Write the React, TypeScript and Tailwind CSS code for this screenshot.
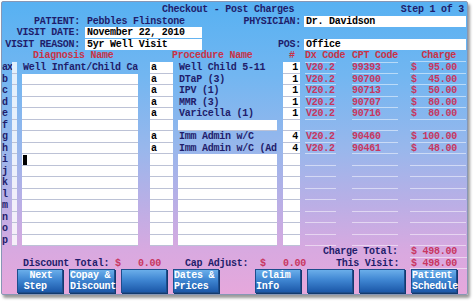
import React from "react";

type Row = {
  l: string;
  dx: string;
  m: string;
  proc: string;
  n: string;
  code: string;
  cpt: string;
  chg: string;
};

const rows: Row[] = [
  { l: "ax", dx: "Well Infant/Child Ca", m: "a", proc: "Well Child 5-11", n: "1", code: "V20.2", cpt: "99393", chg: "$  95.00" },
  { l: "b", dx: "", m: "a", proc: "DTaP (3)", n: "1", code: "V20.2", cpt: "90700", chg: "$  45.00" },
  { l: "c", dx: "", m: "a", proc: "IPV (1)", n: "1", code: "V20.2", cpt: "90713", chg: "$  50.00" },
  { l: "d", dx: "", m: "a", proc: "MMR (3)", n: "1", code: "V20.2", cpt: "90707", chg: "$  80.00" },
  { l: "e", dx: "", m: "a", proc: "Varicella (1)", n: "1", code: "V20.2", cpt: "90716", chg: "$  80.00" },
  { l: "f", dx: "", m: "", proc: "", n: "", code: "", cpt: "", chg: "" },
  { l: "g", dx: "", m: "a", proc: "Imm Admin w/C", n: "4", code: "V20.2", cpt: "90460", chg: "$ 100.00" },
  { l: "h", dx: "", m: "a", proc: "Imm Admin w/C (Ad", n: "4", code: "V20.2", cpt: "90461", chg: "$  48.00" },
  ..."ijklmnop".split("").map((l) => ({ l, dx: "", m: "", proc: "", n: "", code: "", cpt: "", chg: "" })),
];

function Button({ label }: { label: string }) {
  return (
    <div className="w-[46px] h-[24px] border border-[#1d4d8c] bg-[linear-gradient(180deg,#6aaeea_0%,#3f86d2_45%,#1c58a8_100%)] shadow-[1px_1px_0_#123a6e] text-white whitespace-pre leading-[10.5px] pt-[1px] overflow-visible">
      {label}
    </div>
  );
}

export default function App() {
  return (
    <div className="w-[474px] h-[301px] bg-white pt-[1px] pl-[1px] font-['Liberation_Mono','Courier_New',monospace] text-[10px] font-bold tracking-[-0.25px] leading-[11px] text-[#1f1d6b]">
      <div className="w-[467px] h-[294px] border border-[#8797b5] rounded-[2px] shadow-[2px_3px_3px_rgba(0,0,0,0.4)] bg-[linear-gradient(180deg,#57b1f2_0%,#72b6f1_25%,#98b7ec_50%,#b8afe6_68%,#d8a9e0_85%,#e6a8dc_100%)] flex flex-col">
        {/* title */}
        <div className="flex h-[12px] mt-[2px] leading-[12px]">
          <span className="pl-[160px]">Checkout - Post Charges</span>
          <span className="ml-auto pr-[3px]">Step 1 of 3</span>
        </div>

        {/* patient info */}
        <div className="flex h-[11px]">
          <span className="w-[78px] text-right">PATIENT:</span>
          <span className="ml-[5px] w-[117px] pl-[2px]">Pebbles Flinstone</span>
          <span className="w-[99px] text-right">PHYSICIAN:</span>
          <span className="ml-[3px] w-[162px] pl-[2px] bg-white text-black">Dr. Davidson</span>
        </div>
        <div className="flex h-[11px]">
          <span className="w-[78px] text-right">VISIT DATE:</span>
          <span className="ml-[5px] w-[117px] pl-[2px] bg-white text-black">November 22, 2010</span>
        </div>
        <div className="flex h-[11px] mt-[1px]">
          <span className="w-[78px] text-right">VISIT REASON:</span>
          <span className="ml-[5px] w-[117px] pl-[2px] bg-white text-black">5yr Well Visit</span>
          <span className="w-[99px] text-right">POS:</span>
          <span className="ml-[3px] w-[162px] pl-[2px] bg-white text-black">Office</span>
        </div>

        {/* column headers */}
        <div className="flex h-[12px] leading-[12px] text-[#c93246] whitespace-pre">
          <span className="w-[31px]" />
          <span className="w-[139px]">Diagnosis Name</span>
          <span className="w-[117px]">Procedure Name</span>
          <span className="w-[16px]">#</span>
          <span className="w-[47px]">
            <span className="block w-[31px] border-b border-white/50">Dx Code</span>
          </span>
          <span className="w-[58px]">
            <span className="block w-[46px] border-b border-white/50">CPT Code</span>
          </span>
          <span className="w-[56px] border-b border-white/50 text-right pr-[10px]">Charge</span>
        </div>

        {/* line items */}
        <div className="flex flex-col">
          {rows.map((r, i) => (
            <div key={r.l} className="flex h-[11.5px] leading-[11px] whitespace-pre">
              <span className="w-[10px] tracking-[-1px]">{r.l}</span>
              <span className="w-[5px] bg-white/80 border-b border-[#bcc2d6]" />
              <span className="w-[5px]" />
              <span
                className={
                  "w-[116px] pl-[1px] overflow-hidden " +
                  (r.dx ? "" : "bg-white border-b border-[#bcc2d6]")
                }
              >
                {i === 8 ? <span className="inline-block w-[4px] h-[10px] mt-[1px] bg-black" /> : r.dx}
              </span>
              <span className="w-[12px]" />
              <span className="w-[23px] pl-[1px] bg-white border-b border-[#bcc2d6] text-black">{r.m}</span>
              <span className="w-[5px]" />
              <span
                className={
                  "w-[99px] pl-[1px] overflow-hidden " +
                  (r.proc ? "" : "bg-white border-b border-[#bcc2d6]")
                }
              >
                {r.proc}
              </span>
              <span className="w-[6px]" />
              <span className="w-[17px] pr-[2px] text-right bg-white border-b border-[#bcc2d6] text-black">{r.n}</span>
              <span className="w-[5px]" />
              <span className="w-[31px] pl-[1px] border-b border-white/50 text-[#c83660]">{r.code}</span>
              <span className="w-[16px]" />
              <span className="w-[46px] border-b border-white/50 text-[#c83660]">{r.cpt}</span>
              <span className="w-[12px]" />
              <span className="w-[56px] pl-[1px] border-b border-white/50 text-[#c83660]">{r.chg}</span>
            </div>
          ))}
        </div>

        {/* totals */}
        <div className="flex h-[12px] leading-[12px] whitespace-pre">
          <span className="w-[321px]" />
          <span className="w-[87px]">Charge Total:</span>
          <span className="w-[57px] pl-[1px] border-b border-white/50 text-[#c83660]">$ 498.00</span>
        </div>
        <div className="flex h-[11px] whitespace-pre">
          <span className="w-[21px]" />
          <span className="w-[92px]">Discount Total:</span>
          <span className="w-[70px] text-[#c83660]">$   0.00</span>
          <span className="w-[75px]">Cap Adjust:</span>
          <span className="w-[76px] text-[#c83660]">$   0.00</span>
          <span className="w-[74px]">This Visit:</span>
          <span className="w-[57px] pl-[1px] border-b border-white/50 text-[#c83660]">$ 498.00</span>
        </div>

        {/* function keys */}
        <div className="flex h-[24px]">
          <div className="flex gap-[6px] ml-[15px]">
            <Button label={"  Next\n Step"} />
            <Button label={"Copay &\nDiscount"} />
            <Button label="" />
            <Button label={"Dates &\nPrices"} />
          </div>
          <div className="flex gap-[6px] ml-[36px]">
            <Button label={" Claim\nInfo"} />
            <Button label="" />
            <Button label="" />
            <Button label={"Patient\nSchedule"} />
          </div>
        </div>
      </div>
    </div>
  );
}
